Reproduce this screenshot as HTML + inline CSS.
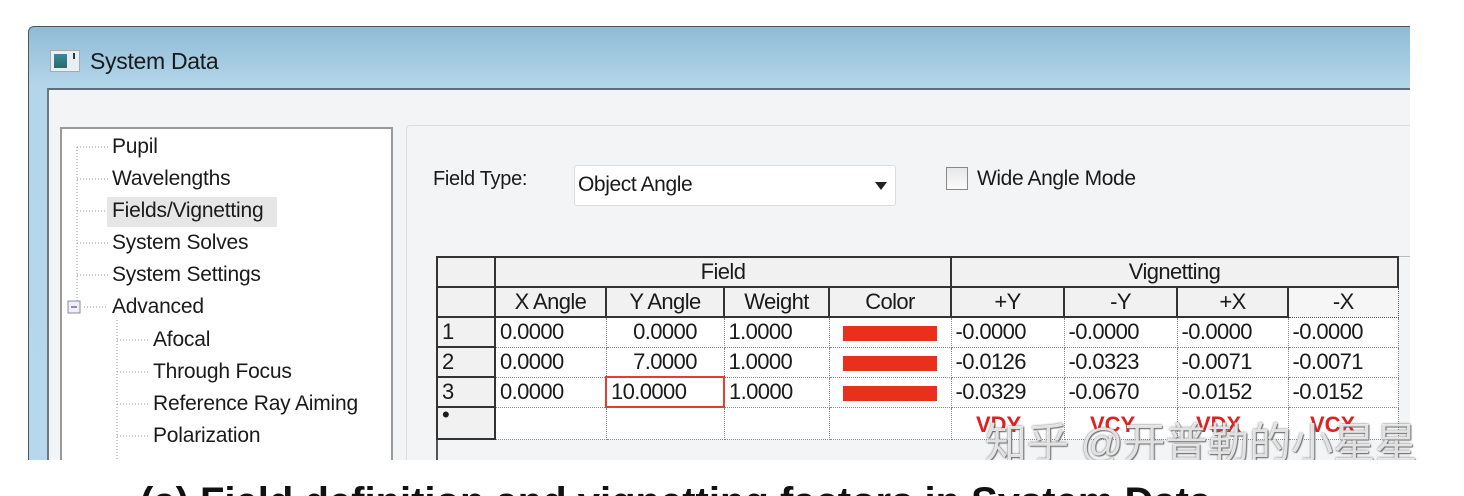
<!DOCTYPE html>
<html style="width:1464px;height:496px;overflow:hidden"><head><meta charset="utf-8"><style>
*{margin:0;padding:0;box-sizing:border-box}
body{width:1464px;height:496px;background:#fff;position:relative;overflow:hidden;font-family:"Liberation Sans","Noto Sans CJK SC",sans-serif;color:#1a1a1a}
.a{position:absolute;white-space:nowrap}
.win{position:absolute;left:28px;top:26px;width:1382px;height:434px;border:1px solid #555;border-bottom:none;border-right:none;border-radius:6px 0 0 0;background:linear-gradient(#8fbbd6,#b4d6ea 60px,#b7d8ec);}
.client{position:absolute;left:47px;top:88px;width:1363px;height:372px;background:#f3f4f6;border-top:2px solid #5f6e78;border-left:2px solid #6a7882}
.tree{position:absolute;left:60px;top:127px;width:333px;height:340px;background:#fff;border:2px solid #9a9a9a}
.ti{position:absolute;font-size:21px;letter-spacing:-0.2px;line-height:24px}
.grp{position:absolute;left:406px;top:125px;width:1010px;height:340px;border:1px solid #dcdcdc;border-radius:4px;background:#f3f4f6}
table{position:absolute;left:436px;top:256px;border-collapse:collapse;font-size:22px;letter-spacing:-0.6px;background:#fff;table-layout:fixed;width:961px}
td{border:1px dotted #888;height:30px;padding:0 4px;line-height:26px;overflow:hidden;white-space:nowrap}
.h td{background:#f1f1f1;border:2px solid #333;text-align:center}
.rh{background:#f1f1f1!important;border:2px solid #333!important;text-align:left!important}
.cb{display:inline-block;width:94px;height:15px;background:#e8301c;vertical-align:middle}
.clip{position:absolute;left:0;top:0;width:1410px;height:460px;overflow:hidden}
</style></head><body>
<div class="clip">
<div class="win"></div>
<div class="a" style="left:50px;top:50px;width:30px;height:22px;border:1px solid #aaa;background:#e9eef2"><div style="position:absolute;left:3px;top:3px;width:13px;height:14px;background:linear-gradient(#3a8aa0,#2a6a6a)"></div><div style="position:absolute;left:22px;top:2px;width:2px;height:6px;background:#333"></div></div>
<div class="a" style="left:90px;top:48px;font-size:23px;letter-spacing:-0.3px">System Data</div>
<div class="client"></div>
<div class="tree"></div>
<svg class="a" style="left:60px;top:127px" width="333" height="333">
<g stroke="#999" stroke-dasharray="1,2" fill="none">
<path d="M17 20V174M17 20H48M17 52H48M17 84H48M17 116H48M17 148H48M24 180H48"/>
<path d="M57 193V333M57 213H88M57 245H88M57 277H88M57 309H88"/>
</g>
<rect x="8" y="174" width="12" height="12" fill="#eef" stroke="#889"/><path d="M11 180H17" stroke="#333"/>
</svg>
<div class="ti a" style="left:112px;top:135px">Pupil</div>
<div class="ti a" style="left:112px;top:167px">Wavelengths</div>
<div class="a" style="left:107px;top:197px;width:170px;height:30px;background:#e6e6e6"></div>
<div class="ti a" style="left:112px;top:199px">Fields/Vignetting</div>
<div class="ti a" style="left:112px;top:231px">System Solves</div>
<div class="ti a" style="left:112px;top:263px">System Settings</div>
<div class="ti a" style="left:112px;top:295px">Advanced</div>
<div class="ti a" style="left:153px;top:328px">Afocal</div>
<div class="ti a" style="left:153px;top:360px">Through Focus</div>
<div class="ti a" style="left:153px;top:392px">Reference Ray Aiming</div>
<div class="ti a" style="left:153px;top:424px">Polarization</div>
<div class="grp"></div>
<div class="a" style="left:433px;top:168px;font-size:20px;letter-spacing:-0.3px">Field Type:</div>
<div class="a" style="left:574px;top:165px;width:322px;height:41px;background:#fff;border:1px solid #ddd;border-radius:3px"></div>
<div class="a" style="left:578px;top:173px;font-size:21px;letter-spacing:-0.4px">Object Angle</div>
<div class="a" style="left:875px;top:182px;width:0;height:0;border-left:6px solid transparent;border-right:6px solid transparent;border-top:8px solid #222"></div>
<div class="a" style="left:946px;top:167px;width:22px;height:23px;border:1px solid #888;background:linear-gradient(#e8e8e8,#fafafa)"></div>
<div class="a" style="left:977px;top:167px;font-size:21px;letter-spacing:-0.4px">Wide Angle Mode</div>
<div class="a" style="left:436px;top:256px;width:974px;height:204px;background:#f3f4f6;border-left:2px solid #555;border-top:1px solid #bbb"></div>
<table>
<colgroup><col style="width:58px"><col style="width:111px"><col style="width:118px"><col style="width:105px"><col style="width:122px"><col style="width:113px"><col style="width:113px"><col style="width:111px"><col style="width:110px"></colgroup>
<tr class="h"><td></td><td colspan="4">Field</td><td colspan="4">Vignetting</td></tr>
<tr class="h"><td></td><td>X Angle</td><td>Y Angle</td><td>Weight</td><td>Color</td><td>+Y</td><td>-Y</td><td>+X</td><td style="border:1px dotted #555;background:#f6f6f6">-X</td></tr>
<tr><td class="rh">1</td><td>0.0000</td><td style="text-align:center">0.0000</td><td>1.0000</td><td style="text-align:center"><span class="cb"></span></td><td>-0.0000</td><td>-0.0000</td><td>-0.0000</td><td>-0.0000</td></tr>
<tr><td class="rh">2</td><td>0.0000</td><td style="text-align:center">7.0000</td><td>1.0000</td><td style="text-align:center"><span class="cb"></span></td><td>-0.0126</td><td>-0.0323</td><td>-0.0071</td><td>-0.0071</td></tr>
<tr><td class="rh">3</td><td>0.0000</td><td style="border:2px solid #e04030">10.0000</td><td>1.0000</td><td style="text-align:center"><span class="cb"></span></td><td>-0.0329</td><td>-0.0670</td><td>-0.0152</td><td>-0.0152</td></tr>
<tr style="height:32px"><td class="rh" style="vertical-align:top;line-height:14px">•</td><td></td><td></td><td></td><td></td><td></td><td></td><td></td><td></td></tr>
</table>
<div class="a" style="left:976px;top:412px;font-size:22px;font-weight:bold;color:#e02020">VDY</div>
<div class="a" style="left:1090px;top:412px;font-size:22px;font-weight:bold;color:#e02020">VCY</div>
<div class="a" style="left:1196px;top:412px;font-size:22px;font-weight:bold;color:#e02020">VDX</div>
<div class="a" style="left:1310px;top:412px;font-size:22px;font-weight:bold;color:#e02020">VCX</div>
</div>
<div class="a" style="left:985px;top:410px;font-size:42px;color:rgba(255,255,255,0.8);text-shadow:0 0 2px #666,1px 1px 1px #777;font-family:'Liberation Sans','Noto Sans CJK SC',sans-serif">知乎 @开普勒的小星星</div>
<div style="position:absolute;left:0;top:460px;width:1464px;height:36px;background:#fff;overflow:hidden">
<div class="a" style="left:140px;top:22px;font-size:40px;line-height:40px;color:#111;font-weight:bold">(a) Field definition and vignetting factors in System Data</div>
</div>
</body></html>
